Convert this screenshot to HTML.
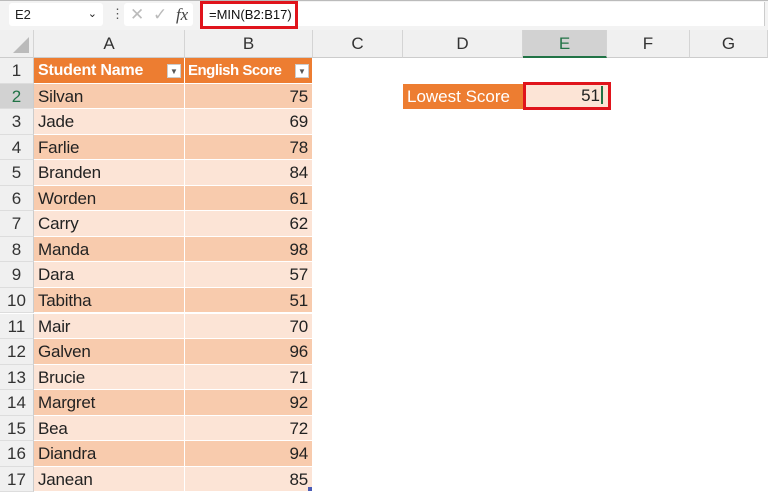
<!DOCTYPE html>
<html><head><style>
*{margin:0;padding:0;box-sizing:border-box}
body{width:768px;height:495px;overflow:hidden;background:#fff;font-family:"Liberation Sans",sans-serif;position:relative}
.a{position:absolute}
.fb{left:0;top:0;width:768px;height:30px;background:#f3f3f3;border-top:1px solid #bbb}
.hdr{top:30px;height:28px;background:#f0f0f0;border-bottom:1px solid #ccc;border-right:1px solid #d4d4d4;font-size:17px;color:#333;text-align:center;line-height:28px}
.rh{left:0;width:34px;background:#f0f0f0;border-right:1px solid #ccc;border-bottom:1px solid #ddd;font-size:17px;color:#333;text-align:center}
.c{font-size:17px;color:#222;padding:0 4px;border-right:1px solid #fff;border-bottom:1px solid #fff;letter-spacing:-0.2px}
</style></head><body>
<div class="a fb"></div>
<div class="a" style="left:9px;top:3px;width:94px;height:23px;background:#fff;border-radius:3px;font-size:13px;line-height:23px;padding-left:6px;color:#222">E2<span style="position:absolute;right:6px;top:0;font-size:11px">&#8964;</span></div>
<div class="a" style="left:111px;top:6px;font-size:13px;color:#555">&#8942;</div>
<div class="a" style="left:124px;top:3px;width:69px;height:23px;background:#fff;border-radius:3px;color:#bbb;font-size:17px;line-height:23px;padding-left:6px;word-spacing:4px">&#10005; &#10003; <i style="color:#444;font-family:'Liberation Serif',serif">fx</i></div>
<div class="a" style="left:200px;top:2px;width:565px;height:24px;background:#fff;border-right:1px solid #ccc"></div>
<div class="a" style="left:200px;top:1px;width:98px;height:28px;border:3px solid #e0141c;font-size:13px;line-height:22px;padding-left:6px;color:#111">=MIN(B2:B17)</div>
<div class="a hdr" style="left:0;width:34px"><div style="position:absolute;right:4px;bottom:4px;width:0;height:0;border-left:16px solid transparent;border-bottom:16px solid #bbb"></div></div>
<div class="a hdr" style="left:34px;width:151px">A</div>
<div class="a hdr" style="left:185px;width:128px">B</div>
<div class="a hdr" style="left:313px;width:90px">C</div>
<div class="a hdr" style="left:403px;width:120px">D</div>
<div class="a hdr" style="left:523px;width:84px;background:#d2d2d2;color:#217346;border-bottom:2px solid #217346">E</div>
<div class="a hdr" style="left:607px;width:83px">F</div>
<div class="a hdr" style="left:690px;width:78px">G</div>
<div id="rows"></div>
<div class="a" style="left:403px;top:84px;width:120px;height:25px;background:#ed7d31;color:#fff;font-size:17px;line-height:25px;padding-left:4px">Lowest Score</div>
<div class="a" style="left:523px;top:82px;width:88px;height:28px;border:3px solid #e0141c;background:#fce4d6;font-size:17px;line-height:22px;text-align:right;padding-right:5px;color:#222">51<span style="display:inline-block;width:2px;height:18px;background:#217346;vertical-align:-3px;margin-left:1px"></span></div>
<script>
var n=["Silvan","Jade","Farlie","Branden","Worden","Carry","Manda","Dara","Tabitha","Mair","Galven","Brucie","Margret","Bea","Diandra","Janean"];
var s=[75,69,78,84,61,62,98,57,51,70,96,71,92,72,94,85];
var h="",H=25.55;
var dd='<span style="position:absolute;right:3px;top:6px;width:14px;height:14px;background:#fff;border:1px solid #ccc;font-size:8px;color:#555;line-height:13px;text-align:center;letter-spacing:0">&#9660;</span>';
for(var i=0;i<17;i++){var t=58+i*H;
h+='<div class="a rh" style="top:'+t+'px;height:'+H+'px;line-height:'+H+'px;'+(i==1?'background:#d2d2d2;color:#217346':'')+'">'+(i+1)+'</div>';
if(i==0){h+='<div class="a c" style="left:34px;top:'+t+'px;width:151px;height:'+H+'px;line-height:'+H+'px;background:#ed7d31;color:#fff;font-weight:bold;font-size:16px">Student Name'+dd+'</div>';
h+='<div class="a c" style="left:185px;top:'+t+'px;width:128px;height:'+H+'px;line-height:'+H+'px;background:#ed7d31;color:#fff;font-weight:bold;white-space:nowrap;font-size:15px;letter-spacing:-0.5px;padding-left:3px">English Score'+dd+'</div>';}
else{var bg=i%2?"#f8cbad":"#fce4d6";
h+='<div class="a c" style="left:34px;top:'+t+'px;width:151px;height:'+H+'px;line-height:'+H+'px;background:'+bg+'">'+n[i-1]+'</div>';
h+='<div class="a c" style="left:185px;top:'+t+'px;width:128px;height:'+H+'px;line-height:'+H+'px;background:'+bg+';text-align:right">'+s[i-1]+'</div>';}}
h+='<div class="a" style="left:308px;top:487px;width:4px;height:4px;background:#4a5bb5"></div>';
document.getElementById("rows").innerHTML=h;
</script>
</body></html>
